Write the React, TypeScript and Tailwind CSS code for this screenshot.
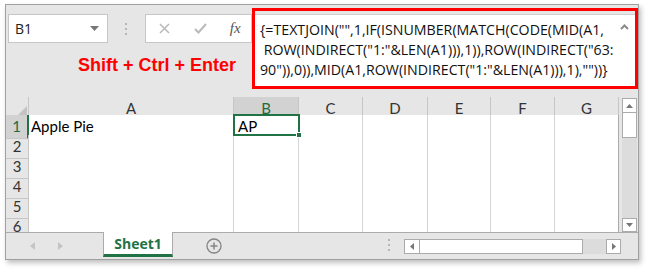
import React from "react";

const cols = ["A", "B", "C", "D", "E", "F", "G"];
const rows = [1, 2, 3, 4, 5, 6];
const gridCols = "grid grid-cols-[23px_205px_65px_64px_65px_63px_64px_64px]";

const ui = { fontFamily: '"Open Sans", "Noto Sans", sans-serif' };
const cellFont = { fontFamily: 'Lato, "Open Sans", sans-serif' };

const FormulaBar = () => {
  return (
    <div className="h-[92px] flex">
      <div className="w-[246px] flex flex-col">
        <div className="flex items-center mt-[9px] ml-[2px]">
          <div className="w-[102px] h-[29px] bg-white border border-[#c6c6c6] flex items-center justify-between pl-[6px] pr-[8px]">
            <span className="text-[14px] text-[#222]" style={ui}>B1</span>
            <svg width="9" height="5" viewBox="0 0 9 5"><path d="M0 0h9L4.5 5z" fill="#777" /></svg>
          </div>
          <div className="w-[38px] flex flex-col items-center gap-[3px]">
            <div className="w-[2px] h-[2px] bg-[#b5b5b5]" />
            <div className="w-[2px] h-[2px] bg-[#b5b5b5]" />
            <div className="w-[2px] h-[2px] bg-[#b5b5b5]" />
          </div>
          <div className="w-[110px] h-[29px] bg-white border border-[#c6c6c6] flex items-center">
            <svg className="ml-[13px]" width="11" height="11" viewBox="0 0 11 11">
              <path d="M1 1l9 9M10 1l-9 9" stroke="#b9b9b9" strokeWidth="1.5" />
            </svg>
            <svg className="ml-[24px]" width="13" height="11" viewBox="0 0 13 11">
              <path d="M1 6l3.5 3.5L12 1" stroke="#b9b9b9" strokeWidth="2" fill="none" />
            </svg>
            <span className="ml-[23px] text-[15px] italic text-[#555]" style={{ fontFamily: '"Liberation Serif", serif' }}>fx</span>
          </div>
        </div>
        <div
          className="mt-[12px] pl-[72px] text-[18px] leading-[21px] font-bold text-[#ff0000]"
          style={{ fontFamily: '"Liberation Sans", Arial, sans-serif' }}
        >
          Shift + Ctrl + Enter
        </div>
      </div>
      <div className="mt-[3px] w-[386px] h-[81px] border-[3px] border-[#ff0000] bg-[#e6e6e6] pt-[3px]">
        <div className="h-full bg-white border-t border-[#d0d0d0] flex">
          <div className="flex-1 pl-[5px] pt-[5px] text-[14.2px] leading-[20px] text-[#111] whitespace-pre" style={ui}>
            <div>{'{=TEXTJOIN("",1,IF(ISNUMBER(MATCH(CODE(MID(A1,'}</div>
            <div>{' ROW(INDIRECT("1:"&LEN(A1))),1)),ROW(INDIRECT("63:'}</div>
            <div>{'90")),0)),MID(A1,ROW(INDIRECT("1:"&LEN(A1))),1),""))}'}</div>
          </div>
          <div className="w-[24px] pt-[9px] flex justify-center">
            <svg width="9" height="6" viewBox="0 0 9 6"><path d="M1 5l3.5-3.5L8 5" stroke="#8a8a8a" strokeWidth="2" fill="none" /></svg>
          </div>
        </div>
      </div>
    </div>
  );
};

const Grid = () => {
  return (
    <div className="relative w-[613px] h-[135px] overflow-hidden">
      <div className={`${gridCols} h-[18px]`}>
        <div className="border-r border-b border-[#c6c6c6] flex items-end justify-end pr-[1px] pb-[1px]">
          <svg width="13" height="13" viewBox="0 0 13 13"><path d="M13 0v13H0z" fill="#c3c3c3" /></svg>
        </div>
        {cols.map((c) => (
          <div
            key={c}
            className={`border-r border-b border-[#c6c6c6] flex items-center justify-center text-[15px] ${c === "B" ? "bg-[#d2d2d2] text-[#1e6b41]" : "text-[#333]"}`}
            style={cellFont}
          >
            {c}
          </div>
        ))}
      </div>
      {rows.map((r) => (
        <div key={r} className={`${gridCols} h-[20px]`}>
          <div
            className={`border-b border-[#c6c6c6] flex items-center justify-center text-[15px] ${r === 1 ? "bg-[#d2d2d2] text-[#1e6b41] border-r-2 border-r-[#217346]" : "border-r text-[#333]"}`}
            style={cellFont}
          >
            {r}
          </div>
          {cols.map((c, i) => (
            <div
              key={c}
              className={`bg-white border-b border-[#d4d4d4] flex items-center pl-[2px] text-[15px] text-black ${i === 6 ? "border-r border-r-[#ababab]" : "border-r"}`}
              style={cellFont}
            >
              {r === 1 && c === "A" ? "Apple Pie" : ""}
              {r === 1 && c === "B" ? <span className="pl-[2px]">AP</span> : ""}
            </div>
          ))}
        </div>
      ))}
      <div className="absolute left-[227px] top-[17px] w-[67px] h-[22px] border-2 border-[#217346]">
        <div className="absolute -right-[4px] -bottom-[4px] w-[6px] h-[6px] bg-[#217346] border border-white" />
      </div>
    </div>
  );
};

const VScroll = () => {
  return (
    <div className="w-[19px] h-[135px] flex flex-col pl-[3px] pr-[1px] pt-[1px] bg-[#e6e6e6]">
      <div className="h-[15px] bg-white border border-[#ababab] flex items-center justify-center">
        <svg width="7" height="4" viewBox="0 0 7 4"><path d="M0 4L3.5 0L7 4z" fill="#777" /></svg>
      </div>
      <div className="h-[26px] bg-white border border-[#ababab] -mt-px" />
      <div className="flex-1 bg-[#dcdcdc]" />
      <div className="h-[14px] bg-white border border-[#ababab] flex items-center justify-center">
        <svg width="7" height="4" viewBox="0 0 7 4"><path d="M0 0h7L3.5 4z" fill="#777" /></svg>
      </div>
    </div>
  );
};

const TabBar = () => {
  return (
    <div className="h-[27px] border-t border-[#ababab] flex items-start">
      <div className="w-[97px] h-[26px] flex items-center">
        <svg className="ml-[24px]" width="5" height="8" viewBox="0 0 5 8"><path d="M5 0v8L0 4z" fill="#c4c4c4" /></svg>
        <svg className="ml-[23px]" width="5" height="8" viewBox="0 0 5 8"><path d="M0 0v8l5-4z" fill="#c4c4c4" /></svg>
      </div>
      <div className="-mt-px w-[70px] h-[25px] bg-white border-x border-[#ababab] border-b-[3px] border-b-[#217346] flex items-center justify-center">
        <span className="text-[14px] font-bold text-[#217346]" style={ui}>Sheet1</span>
      </div>
      <div className="w-[82px] h-[26px] flex items-center justify-center">
        <svg width="16" height="16" viewBox="0 0 16 16">
          <circle cx="8" cy="8" r="7" stroke="#858585" strokeWidth="1.3" fill="none" />
          <path d="M8 4.5v7M4.5 8h7" stroke="#858585" strokeWidth="1.5" />
        </svg>
      </div>
      <div className="ml-[133px] mt-[6px] flex flex-col gap-[3px]">
        <div className="w-[2px] h-[2px] bg-[#b5b5b5]" />
        <div className="w-[2px] h-[2px] bg-[#b5b5b5]" />
        <div className="w-[2px] h-[2px] bg-[#b5b5b5]" />
      </div>
      <div className="ml-[14px] mt-[6px] w-[217px] h-[15px] flex">
        <div className="w-[16px] bg-white border border-[#ababab] flex items-center justify-center">
          <svg width="4" height="7" viewBox="0 0 4 7"><path d="M4 0v7L0 3.5z" fill="#777" /></svg>
        </div>
        <div className="w-[164px] bg-white border border-[#ababab] -ml-px" />
        <div className="flex-1 bg-[#dcdcdc]" />
        <div className="w-[15px] bg-white border border-[#ababab] flex items-center justify-center">
          <svg width="4" height="7" viewBox="0 0 4 7"><path d="M0 0v7l4-3.5z" fill="#777" /></svg>
        </div>
      </div>
    </div>
  );
};

export default function App() {
  return (
    <div className="w-[648px] h-[271px] bg-white pt-[4px] pl-[5px]">
      <div className="w-[634px] h-[256px] border border-[#a0a0a0] bg-[#e6e6e6] flex flex-col shadow-[2px_3px_5px_rgba(0,0,0,0.25)]">
        <FormulaBar />
        <div className="flex">
          <Grid />
          <VScroll />
        </div>
        <TabBar />
      </div>
    </div>
  );
}
